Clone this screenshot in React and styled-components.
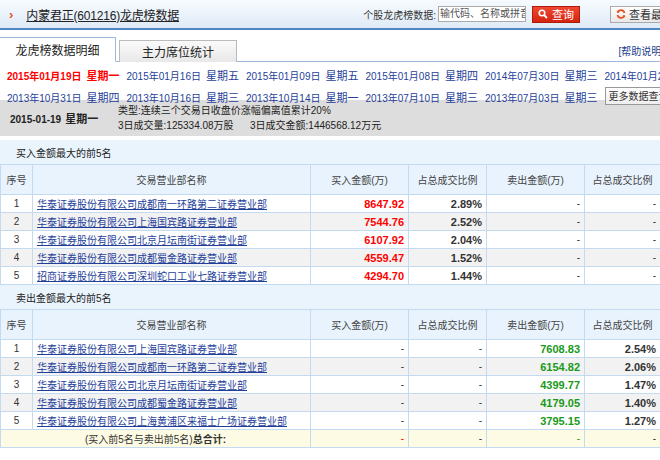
import React from 'react';
import styled, { createGlobalStyle } from 'styled-components';

const Global = createGlobalStyle`
  body { margin: 0; background: #fff; font-family: "Liberation Sans", "Noto Sans CJK SC", sans-serif; font-size: 10px; color: #333; overflow: hidden; }
`;

const Page = styled.div`
  width: 680px;
`;

const Header = styled.div`
  height: 28px;
  display: flex;
  align-items: center;
  background: linear-gradient(#f7fbff, #dfeaf6);
  border-bottom: 2px solid #4f86c6;
  padding: 0 0 0 9px;
`;

const Arrow = styled.span`
  color: #e8501e;
  font-weight: bold;
  font-size: 13px;
  margin-right: 13px;
`;

const Title = styled.a`
  font-size: 12px;
  letter-spacing: -0.2px;
  color: #222;
  text-decoration: underline;
  flex: 1;
`;

const SearchLabel = styled.span`
  font-size: 10px;
  margin-right: 2px;
`;

const SearchInput = styled.div`
  width: 84px;
  height: 14px;
  line-height: 14px;
  border: 1px solid #aaa;
  background: #fff;
  color: #555;
  padding: 0 1px;
  font-size: 10px;
  white-space: nowrap;
  overflow: hidden;
  margin-right: 6px;
`;

const SearchBtn = styled.div`
  background: linear-gradient(#f04830, #d42410);
  color: #fff;
  border: 1px solid #b01a08;
  height: 15px;
  padding: 0 5px;
  display: flex;
  align-items: center;
  gap: 4px;
  font-size: 11px;
  margin-right: 30px;
`;

const LatestBtn = styled.div`
  background: linear-gradient(#fff, #e8e8e8);
  border: 1px solid #aaa;
  height: 15px;
  padding: 0 6px 0 5px;
  display: flex;
  align-items: center;
  gap: 3px;
  font-size: 11px;
  color: #333;
  white-space: nowrap;
`;

const TabBar = styled.div`
  display: flex;
  align-items: flex-end;
  margin-top: 7px;
  height: 24px;
  border-bottom: 1px solid #9bb9de;
`;

const Tab = styled.div`
  width: ${p => (p.$active ? 116 : 118)}px;
  height: ${p => (p.$active ? 25 : 22)}px;
  display: flex;
  align-items: center;
  justify-content: center;
  font-size: 12px;
  color: #222;
  background: ${p => (p.$active ? '#fff' : 'linear-gradient(#fafafa,#e8e8e8)')};
  border: 1px solid ${p => (p.$active ? '#9bb9de' : '#bbb')};
  border-bottom: ${p => (p.$active ? '1px solid #fff' : 'none')};
  border-left: ${p => (p.$active ? 'none' : '1px solid #bbb')};
  margin-bottom: -1px;
  margin-right: 3px;
  box-sizing: border-box;
`;

const Help = styled.span`
  margin-left: auto;
  margin-right: 16px;
  align-self: center;
  margin-top: 2px;
  font-size: 10px;
  color: #1c3e8c;
`;

const Dates = styled.div`
  display: grid;
  grid-template-columns: repeat(6, 119.5px);
  padding: 5px 0 0 7px;
  row-gap: 6px;
  height: 34px;
  box-sizing: border-box;
  height: 38px;
`;

const DateLink = styled.span`
  font-size: 10px;
  white-space: nowrap;
  min-width: 0;
  color: ${p => (p.$current ? '#f00' : '#1f3f9a')};
  font-weight: ${p => (p.$current ? 'bold' : 'normal')};
  b { font-weight: inherit; font-size: 11px; margin-left: 5px; }
`;

const MoreBtn = styled.span`
  font-size: 10px;
  border: 1px solid #999;
  background: linear-gradient(#fff, #eee);
  padding: 0 3px;
  margin-top: -2px;
  white-space: nowrap;
  justify-self: start;
`;

const Info = styled.div`
  background: #dddddd;
  height: 36px;
  display: flex;
  align-items: center;
`;

const InfoDate = styled.div`
  width: 108px;
  padding-left: 10px;
  font-weight: bold;
  font-size: 10px;
  color: #222;
  white-space: nowrap;
  span { font-size: 11px; margin-left: 4px; }
`;

const InfoText = styled.div`
  font-size: 10px;
  color: #222;
  line-height: 15px;
  white-space: nowrap;
  div { display: flex; }
  div span:first-child { width: 132px; }
`;

const Section = styled.div`
  background: #eaf4fd;
  height: 24px;
  display: flex;
  align-items: center;
  padding-left: 16px;
  font-size: 10px;
  color: #222;
  width: 660px;
  box-sizing: border-box;
  margin-top: ${p => p.$gap || 0}px;
`;

const Table = styled.table`
  border-collapse: collapse;
  table-layout: fixed;
  width: 660px;
`;

const Th = styled.th`
  background: #e8f3fd;
  border: 1px solid #c4daf0;
  font-weight: normal;
  height: 27px;
  color: #444;
  font-size: 10px;
`;

const Row = styled.tr`
  background: ${p => (p.$total ? '#fdfbe3' : p.$alt ? '#f2f2f2' : '#fff')};
`;

const Td = styled.td`
  border: 1px solid #c4daf0;
  height: 17px;
  padding: 0 4px;
  text-align: ${p => p.$align || 'right'};
  color: ${p => p.$color || '#333'};
  font-weight: ${p => (p.$bold ? 'bold' : 'normal')};
  white-space: nowrap;
  overflow: hidden;
  font-size: ${p => (p.$bold ? 11 : 10)}px;
`;

const Link = styled.a`
  color: #1f3f9a;
  text-decoration: underline;
`;

const Cols = () => (
  <colgroup>
    <col style={{ width: 32 }} />
    <col style={{ width: 278 }} />
    <col style={{ width: 98 }} />
    <col style={{ width: 78 }} />
    <col style={{ width: 98 }} />
    <col style={{ width: 76 }} />
  </colgroup>
);

const Head = () => (
  <thead>
    <tr>
      <Th>序号</Th>
      <Th>交易营业部名称</Th>
      <Th>买入金额(万)</Th>
      <Th>占总成交比例</Th>
      <Th>卖出金额(万)</Th>
      <Th>占总成交比例</Th>
    </tr>
  </thead>
);

const dates = [
  ['2015年01月19日', '星期一', true], ['2015年01月16日', '星期五'], ['2015年01月09日', '星期五'],
  ['2015年01月08日', '星期四'], ['2014年07月30日', '星期三'], ['2014年01月29日', '星期三'],
  ['2013年10月31日', '星期四'], ['2013年10月16日', '星期三'], ['2013年10月14日', '星期一'],
  ['2013年07月10日', '星期三'], ['2013年07月03日', '星期三'],
];

const buys = [
  ['华泰证券股份有限公司成都南一环路第二证券营业部', '8647.92', '2.89%'],
  ['华泰证券股份有限公司上海国宾路证券营业部', '7544.76', '2.52%'],
  ['华泰证券股份有限公司北京月坛南街证券营业部', '6107.92', '2.04%'],
  ['华泰证券股份有限公司成都蜀金路证券营业部', '4559.47', '1.52%'],
  ['招商证券股份有限公司深圳蛇口工业七路证券营业部', '4294.70', '1.44%'],
];

const sells = [
  ['华泰证券股份有限公司上海国宾路证券营业部', '7608.83', '2.54%'],
  ['华泰证券股份有限公司成都南一环路第二证券营业部', '6154.82', '2.06%'],
  ['华泰证券股份有限公司北京月坛南街证券营业部', '4399.77', '1.47%'],
  ['华泰证券股份有限公司成都蜀金路证券营业部', '4179.05', '1.40%'],
  ['华泰证券股份有限公司上海黄浦区来福士广场证券营业部', '3795.15', '1.27%'],
];

export default function App() {
  return (
    <Page>
      <Global />
      <Header>
        <Arrow>›</Arrow>
        <Title>内蒙君正(601216)龙虎榜数据</Title>
        <SearchLabel>个股龙虎榜数据:</SearchLabel>
        <SearchInput>输代码、名称或拼音</SearchInput>
        <SearchBtn>
          <svg width="10" height="10" viewBox="0 0 10 10"><circle cx="4" cy="4" r="2.8" fill="none" stroke="#fff" strokeWidth="1.6" /><line x1="6" y1="6" x2="9" y2="9" stroke="#fff" strokeWidth="1.8" /></svg>
          查询
        </SearchBtn>
        <LatestBtn>
          <svg width="10" height="10" viewBox="0 0 10 10"><path d="M8.5 4A3.6 3.6 0 0 0 1.6 3.5M1.5 6a3.6 3.6 0 0 0 6.9.5" fill="none" stroke="#e8501e" strokeWidth="1.6" /><path d="M0.5 1.5L1.6 4L4 3z M9.5 8.5L8.4 6L6 7z" fill="#e8501e" /></svg>
          查看最新
        </LatestBtn>
      </Header>
      <TabBar>
        <Tab $active>龙虎榜数据明细</Tab>
        <Tab>主力席位统计</Tab>
        <Help>[帮助说明]</Help>
      </TabBar>
      <Dates>
        {dates.map(([d, w, c]) => (
          <DateLink key={d} $current={c}>{d}<b>{w}</b></DateLink>
        ))}
        <MoreBtn>更多数据查询</MoreBtn>
      </Dates>
      <Info>
        <InfoDate>2015-01-19<span>星期一</span></InfoDate>
        <InfoText>
          <div>类型:连续三个交易日收盘价涨幅偏离值累计20%</div>
          <div><span>3日成交量:125334.08万股</span><span>3日成交金额:1446568.12万元</span></div>
        </InfoText>
      </Info>
      <Section $gap={4}>买入金额最大的前5名</Section>
      <Table>
        <Cols />
        <Head />
        <tbody>
          {buys.map(([n, a, r], i) => (
            <Row key={n} $alt={i % 2 === 1}>
              <Td $align="center">{i + 1}</Td>
              <Td $align="left"><Link>{n}</Link></Td>
              <Td $color="#f00" $bold>{a}</Td>
              <Td $bold>{r}</Td>
              <Td>-</Td>
              <Td>-</Td>
            </Row>
          ))}
        </tbody>
      </Table>
      <Section>卖出金额最大的前5名</Section>
      <Table>
        <Cols />
        <Head />
        <tbody>
          {sells.map(([n, a, r], i) => (
            <Row key={n} $alt={i % 2 === 1}>
              <Td $align="center">{i + 1}</Td>
              <Td $align="left"><Link>{n}</Link></Td>
              <Td>-</Td>
              <Td>-</Td>
              <Td $color="#1a9a1a" $bold>{a}</Td>
              <Td $bold>{r}</Td>
            </Row>
          ))}
          <Row $total>
            <Td colSpan={2} $align="center">(买入前5名与卖出前5名)<b>总合计:</b></Td>
            <Td $color="#f00">-</Td>
            <Td>-</Td>
            <Td $color="#1a9a1a">-</Td>
            <Td>-</Td>
          </Row>
        </tbody>
      </Table>
    </Page>
  );
}
